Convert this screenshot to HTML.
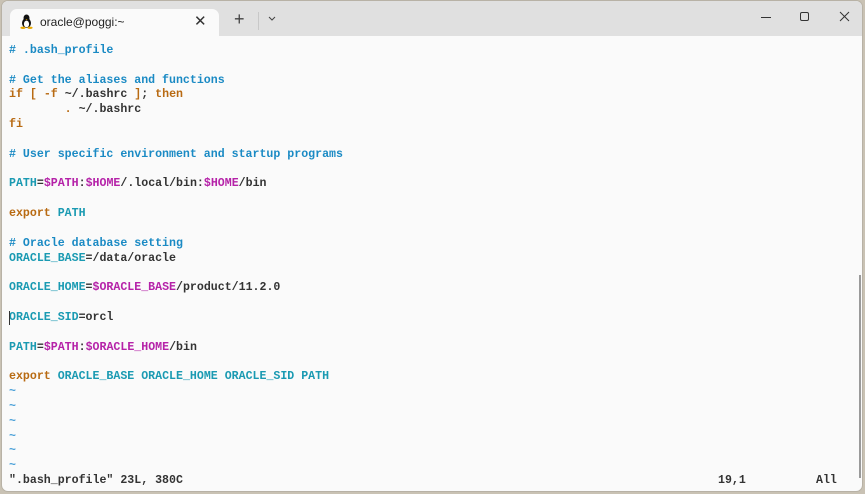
<!DOCTYPE html>
<html><head><meta charset="utf-8"><style>
html,body{margin:0;padding:0;}
body{width:865px;height:494px;overflow:hidden;background:#c9c2b4;position:relative;font-family:"Liberation Sans",sans-serif;}
.win{position:absolute;left:1px;top:0;width:862px;height:492px;background:#fafafa;border-radius:7px;overflow:hidden;border:1px solid #b8b2a6;box-sizing:border-box;}
.title{position:absolute;left:0;top:0;right:0;height:35px;background:#e0e0e0;}
.tab{position:absolute;left:8px;top:8px;width:209px;height:27px;background:#fafafa;border-radius:7px 7px 0 0;}
.tab .t{position:absolute;left:30px;top:6px;font-size:12px;color:#222;}
.tab .x{position:absolute;left:184px;top:3px;font-size:15px;color:#333;}
.plus{position:absolute;left:232px;top:8px;font-size:18px;color:#444;font-weight:300;}
.sep{position:absolute;left:256px;top:11px;width:1px;height:18px;background:#c8c8c8;}
.dd{position:absolute;left:265px;top:12px;}
.ctl{position:absolute;top:10px;}
pre{position:absolute;left:7px;top:43px;margin:0;font-family:"Liberation Mono",monospace;font-weight:bold;font-size:11.6px;line-height:14.83px;color:#333;}
.c{color:#1a8ac4}.k{color:#b86a12}.m{color:#b522a8}.v{color:#1a9ab2}.tl{color:#4aa0d8}
.cur{position:absolute;left:7px;top:310px;width:1px;height:14px;background:#333;}
.sb{position:absolute;left:857px;top:274px;width:2px;height:203px;background:#9a9a9a;}
</style></head><body>
<div class="win">
<div class="title">
 <div class="tab">
  <svg style="position:absolute;left:10px;top:5px" width="13" height="15" viewBox="0 0 13 15">
   <ellipse cx="6.5" cy="9" rx="4.5" ry="5" fill="#111"/>
   <ellipse cx="6.5" cy="4" rx="3" ry="3.5" fill="#111"/>
   <ellipse cx="6.5" cy="10" rx="2.6" ry="3.4" fill="#fff"/>
   <ellipse cx="3" cy="13.8" rx="2.6" ry="1.2" fill="#e8a800"/>
   <ellipse cx="10" cy="13.8" rx="2.6" ry="1.2" fill="#e8a800"/>
   <path d="M5.5 5.2 L6.5 6.3 L7.5 5.2Z" fill="#e8a800"/>
  </svg>
  <div class="t">oracle@poggi:~</div>
  <div class="x">✕</div>
 </div>
 <div class="plus">+</div>
 <div class="sep"></div>
 <svg class="dd" width="10" height="10" viewBox="0 0 10 10"><path d="M2 4 L5 7 L8 4" stroke="#444" fill="none" stroke-width="1"/></svg>
 <svg class="ctl" style="left:758px" width="12" height="12"><path d="M1 6.5 H11" stroke="#333" stroke-width="1"/></svg>
 <svg class="ctl" style="left:797px" width="12" height="12"><rect x="1.5" y="1.5" width="8" height="8" rx="1.5" stroke="#333" fill="none" stroke-width="1"/></svg>
 <svg class="ctl" style="left:837px" width="12" height="12"><path d="M1 1 L10 10 M10 1 L1 10" stroke="#333" stroke-width="1"/></svg>
</div>
<pre><span class="c"># .bash_profile</span>

<span class="c"># Get the aliases and functions</span>
<span class="k">if</span> <span class="k">[</span> <span class="k">-f</span> ~/.bashrc <span class="k">]</span>; <span class="k">then</span>
        <span class="k">.</span> ~/.bashrc
<span class="k">fi</span>

<span class="c"># User specific environment and startup programs</span>

<span class="v">PATH</span>=<span class="m">$PATH</span>:<span class="m">$HOME</span>/.local/bin:<span class="m">$HOME</span>/bin

<span class="k">export</span> <span class="v">PATH</span>

<span class="c"># Oracle database setting</span>
<span class="v">ORACLE_BASE</span>=/data/oracle

<span class="v">ORACLE_HOME</span>=<span class="m">$ORACLE_BASE</span>/product/11.2.0

<span class="v">ORACLE_SID</span>=orcl

<span class="v">PATH</span>=<span class="m">$PATH</span>:<span class="m">$ORACLE_HOME</span>/bin

<span class="k">export</span> <span class="v">ORACLE_BASE ORACLE_HOME ORACLE_SID PATH</span>
<span class="tl">~</span>
<span class="tl">~</span>
<span class="tl">~</span>
<span class="tl">~</span>
<span class="tl">~</span>
<span class="tl">~</span>
".bash_profile" 23L, 380C</pre>
<div style="position:absolute;left:716px;top:473px;font-family:'Liberation Mono',monospace;font-weight:bold;font-size:11.6px;color:#333;">19,1</div>
<div style="position:absolute;left:814px;top:473px;font-family:'Liberation Mono',monospace;font-weight:bold;font-size:11.6px;color:#333;">All</div>
<div class="cur"></div>
<div class="sb"></div>
</div>
</body></html>
